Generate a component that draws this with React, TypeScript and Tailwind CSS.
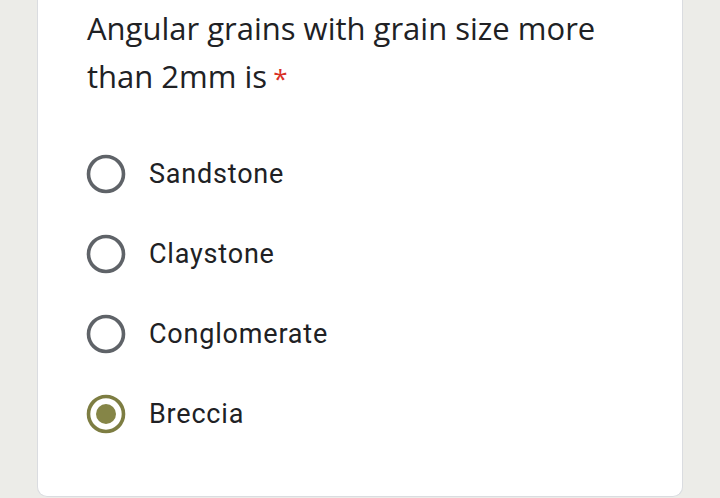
import React from "react";

const options = ["Sandstone", "Claystone", "Conglomerate", "Breccia"];

function Radio({ checked }: { checked: boolean }) {
  return (
    <svg width="42" height="42" viewBox="0 0 42 42" className="shrink-0">
      <circle cx="21" cy="21" r="17.5" fill="none" stroke={checked ? "#7d7d42" : "#5f6368"} strokeWidth="3.6" />
      {checked && <circle cx="21" cy="21" r="10" fill="#858547" />}
    </svg>
  );
}

export default function App() {
  return (
    <div className="w-[720px] h-[498px] bg-[#ecece8] overflow-hidden">
      <div className="ml-[37px] w-[646px] h-[497px] bg-white border-x border-b border-[#dadce0] rounded-b-[10px] pl-[49px] pt-[4px]">
        <div className="text-[31px] leading-[48px] text-[#202124] tracking-[0px]" style={{ fontFamily: '"Open Sans", sans-serif' }}>
          Angular grains with grain size more
          <br />
          than 2mm is<span className="text-[#d93025] text-[26px] ml-[6px]">*</span>
        </div>
        <div className="mt-[51px] flex flex-col gap-[38px]">
          {options.map((o, i) => (
            <div key={o} className="flex items-center gap-[22px] -ml-[2px]">
              <Radio checked={i === 3} />
              <span className="text-[27px] text-[#202124] tracking-[0.8px]" style={{ fontFamily: 'Roboto, sans-serif' }}>{o}</span>
            </div>
          ))}
        </div>
      </div>
    </div>
  );
}
